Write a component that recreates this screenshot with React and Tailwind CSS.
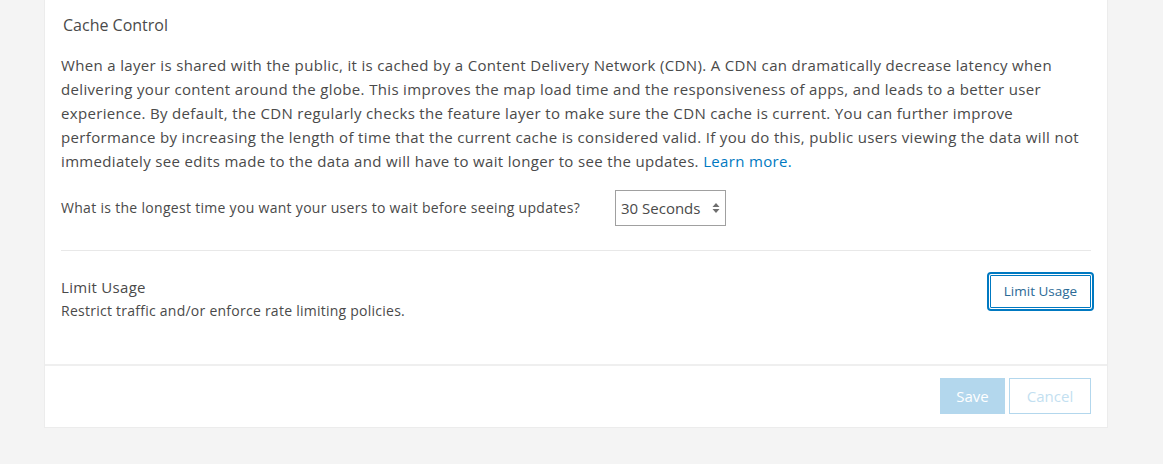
import React from 'react';

const font = { fontFamily: '"Open Sans", "Liberation Sans", sans-serif' };

function UpDownArrows() {
  return (
    <svg width="8" height="12" viewBox="0 0 8 12" className="fill-[#6e6e6e]">
      <path d="M4 1 L7.5 5 H0.5 Z" />
      <path d="M4 11 L7.5 7 H0.5 Z" />
    </svg>
  );
}

export default function App() {
  return (
    <div className="min-h-[464px] w-full bg-[#f4f4f4] pl-[44px] text-[#4a4a4a]" style={font}>
      <div className="w-[1064px] border-x border-[#ececec] bg-white">
        {/* Cache control */}
        <div className="px-4 pt-[13px]">
          <h3 className="pl-[2px] text-[16px] leading-[24px] font-normal">Cache Control</h3>
          <p className="mt-4 text-[15px] leading-[24px] tracking-[0.34px]">
            When a layer is shared with the public, it is cached by a Content Delivery Network (CDN). A CDN can dramatically decrease latency when delivering your content around the globe. This improves the map load time and the responsiveness of apps, and leads to a better user experience. By default, the CDN regularly checks the feature layer to make sure the CDN cache is current. You can further improve performance by increasing the length of time that the current cache is considered valid. If you do this, public users viewing the data will not immediately see edits made to the data and will have to wait longer to see the updates.{' '}
            <a href="#" className="text-[#0079c1]">Learn more.</a>
          </p>

          <div className="mt-[17px] flex items-center">
            <label className="w-[554px] text-[14px] leading-[20px] tracking-[0.3px]">
              What is the longest time you want your users to wait before seeing updates?
            </label>
            <div className="flex h-[36px] w-[111px] items-center justify-between border border-[#a0a0a0] pl-[5px] pr-[5px] text-[15px]">
              <span>30 Seconds</span>
              <UpDownArrows />
            </div>
          </div>

          <div className="mt-6 border-t border-[#e8e8e8]" />

          {/* Limit usage */}
          <div className="flex items-start justify-between pt-[24px] pb-[41px]">
            <div>
              <div className="text-[15px] leading-[24px] tracking-[0.3px]">Limit Usage</div>
              <div className="text-[14px] leading-[24px] tracking-[0.25px]">Restrict traffic and/or enforce rate limiting policies.</div>
            </div>
            <button className="h-[33px] w-[101px] rounded-[1px] border border-[#0079c1] bg-white text-[13.5px] text-[#2b6a96] outline-2 outline-offset-1 outline-[#0079c1]">
              Limit Usage
            </button>
          </div>
        </div>

        <div className="h-[2px] bg-[#efefef]" />

        {/* Footer */}
        <div className="flex justify-end gap-[4px] border-b border-[#ececec] px-4 pt-3 pb-[13px]">
          <button className="h-[36px] w-[65px] bg-[#b3d7ed] text-[15px] text-white">Save</button>
          <button className="h-[36px] w-[82px] border border-[#b3d7ed] bg-white text-[15px] text-[#c3dff1]">Cancel</button>
        </div>
      </div>
    </div>
  );
}
